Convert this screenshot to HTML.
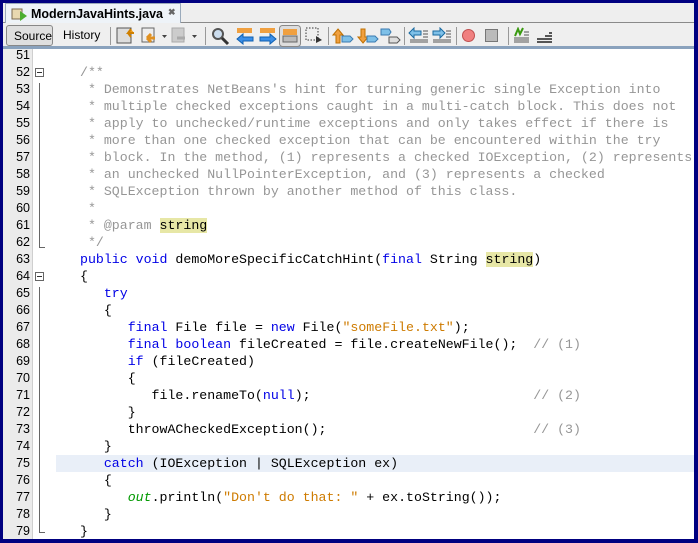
<!DOCTYPE html>
<html><head><meta charset="utf-8"><style>
*{margin:0;padding:0;box-sizing:border-box}
body{width:698px;height:543px;background:#000080;position:relative;overflow:hidden;font-family:"Liberation Sans",sans-serif}
#win{position:absolute;left:3px;top:3px;width:691px;height:536px;background:#fff}
#tabs{position:absolute;left:0;top:0;width:691px;height:20px;background:#eeeeee;border-bottom:1px solid #8a8a8a}
#tab{position:absolute;left:2px;top:0;width:176px;height:21px;background:#eef3f8;border:1px solid #9aaabb;border-bottom:none;font-weight:bold;font-size:12.5px;padding:3px 0 0 25px;color:#000}
#tb{position:absolute;left:0;top:20px;width:691px;height:26px;background:#efefef;border-bottom:3px solid #8aa2bd}
.btn{position:absolute;top:2px;height:21px;font-size:12px;padding-top:3px}
.sep{position:absolute;top:4px;width:1px;height:18px;background:#999}
.ic{position:absolute;top:4px}
#gut{position:absolute;left:0;top:46px;width:30px;height:490px;background:#ebebeb;border-right:1px solid #cfcfcf}
#code{position:absolute;left:0;top:44px;width:691px;font-family:"Liberation Mono",monospace;font-size:13.25px}
.l{height:17px;line-height:17px;position:relative;white-space:pre}
.n{position:absolute;left:0;width:27px;text-align:right;font-family:"Liberation Sans",sans-serif;font-size:12.5px;color:#000}
.t{position:absolute;left:77px}
.c{color:#969696}.k{color:#0000e6}.s{color:#ce7b00}.h{background:#e7e7a6}.o{color:#009900;font-style:italic}
.hl{background:#e9eff8;position:absolute;left:53px;right:0;top:0;height:17px}
.fb{position:absolute;left:32px;top:4px;width:9px;height:9px;border:1px solid #666;background:#fff}
.fb:after{content:"";position:absolute;left:1px;top:3px;width:5px;height:1px;background:#333}
.vl{position:absolute;left:36px;width:1px;background:#666}
</style></head><body>
<div id="win">
<div id="tabs"><div id="tab"><svg style="position:absolute;left:4px;top:2px" width="18" height="16"><rect x="2" y="3" width="10" height="10" fill="#e8d8b0" stroke="#7a6a50"/><path d="M10 5l7 5-7 5z" fill="#4caf30"/></svg>ModernJavaHints.java<span style="position:absolute;left:162px;top:3px;font-size:9px;color:#666">✖</span></div></div>
<div id="tb">
<div class="btn" style="left:3px;width:47px;border:1px solid #888;border-radius:3px;background:#dfdfdf;padding-left:7px">Source</div>
<div class="btn" style="left:60px">History</div>
<div class="sep" style="left:107px"></div>
<svg class="ic" style="left:113px" width="20" height="18"><rect x="1" y="1" width="14" height="15" fill="#ddd" stroke="#555"/><path d="M18 6h-6l3-4M12 6l3 4" stroke="#d08000" fill="#f0a020" stroke-width="2"/></svg>
<svg class="ic" style="left:138px" width="28" height="18"><rect x="1" y="1" width="12" height="14" fill="#eee" stroke="#666"/><path d="M6 11h8M6 11l4-4M6 11l4 4" stroke="#e09020" stroke-width="3"/><path d="M21 8l5 0-2.5 3z" fill="#444"/></svg>
<svg class="ic" style="left:168px" width="28" height="18"><rect x="1" y="1" width="12" height="14" fill="#ccc" stroke="#aaa"/><path d="M14 11h-8" stroke="#aaa" stroke-width="3"/><path d="M21 8l5 0-2.5 3z" fill="#444"/></svg>
<div class="sep" style="left:202px"></div>
<svg class="ic" style="left:208px" width="20" height="20"><circle cx="7" cy="7" r="5" fill="#cde" stroke="#555" stroke-width="2"/><path d="M11 11l6 6" stroke="#333" stroke-width="3"/></svg>
<svg class="ic" style="left:232px" width="20" height="18"><rect x="2" y="1" width="15" height="5" fill="#f0a040"/><path d="M2 12l6-5v3h10v4H8v3z" fill="#3a8ee8" stroke="#1060b0"/></svg>
<svg class="ic" style="left:255px" width="20" height="18"><rect x="2" y="1" width="15" height="5" fill="#f0a040"/><path d="M18 12l-6-5v3H2v4h10v3z" fill="#3a8ee8" stroke="#1060b0"/></svg>
<svg class="ic" style="left:276px;top:2px" width="22" height="22"><rect x="0.5" y="0.5" width="21" height="21" rx="3" fill="#ddd" stroke="#888"/><rect x="4" y="4" width="14" height="6" fill="#f0a040"/><rect x="4" y="11" width="14" height="6" fill="#bbb" stroke="#666"/></svg>
<svg class="ic" style="left:302px" width="18" height="18"><rect x="1" y="1" width="12" height="12" fill="none" stroke="#333" stroke-dasharray="1.5"/><path d="M11 9l6 4-6 3z" fill="#333"/></svg>
<div class="sep" style="left:325px"></div>
<svg class="ic" style="left:329px" width="22" height="18"><path d="M6 2l5 6H8v8H4V8H1z" fill="#f0a040" stroke="#c07000"/><path d="M10 9h8l3 3-3 3h-8z" fill="#7ec0e8" stroke="#3a7ab0"/></svg>
<svg class="ic" style="left:354px" width="22" height="18"><path d="M6 16l5-6H8V2H4v8H1z" fill="#f0a040" stroke="#c07000"/><path d="M10 9h8l3 3-3 3h-8z" fill="#7ec0e8" stroke="#3a7ab0"/></svg>
<svg class="ic" style="left:377px" width="22" height="18"><path d="M1 2h8l2 3-2 3H1z" fill="#7ec0e8" stroke="#3a7ab0"/><path d="M9 10h8l3 3-3 3H9z" fill="#ddd" stroke="#555"/></svg>
<div class="sep" style="left:401px"></div>
<svg class="ic" style="left:405px" width="22" height="18"><path d="M1 6l5-5v3h7v4H6v3z" fill="#7ec0e8" stroke="#1a6aa0"/><path d="M2 13h18M2 15h18M15 4h5M15 7h5M15 10h5" stroke="#555"/></svg>
<svg class="ic" style="left:428px" width="22" height="18"><path d="M14 6L9 1v3H2v4h7v3z" fill="#7ec0e8" stroke="#1a6aa0"/><path d="M2 13h18M2 15h18M15 4h5M15 7h5M15 10h5" stroke="#555"/></svg>
<div class="sep" style="left:453px"></div>
<svg class="ic" style="left:458px;top:5px" width="16" height="16"><circle cx="7.5" cy="7.5" r="6" fill="#f08080" stroke="#c05050"/></svg>
<svg class="ic" style="left:481px;top:5px" width="16" height="16"><rect x="1.5" y="1.5" width="12" height="12" fill="#bbb" stroke="#777"/></svg>
<div class="sep" style="left:505px"></div>
<svg class="ic" style="left:509px" width="20" height="18"><path d="M3 9l3-7 2 5 3-6" stroke="#3a9a10" stroke-width="2" fill="none"/><path d="M2 11h15M2 13h15M2 15h15M12 5h5M12 8h5" stroke="#555"/></svg>
<svg class="ic" style="left:532px" width="20" height="18"><path d="M2 12h15M2 15h15M10 9h7M14 6h3" stroke="#222" stroke-width="1.5"/></svg>
</div>
<div id="gut"></div>
<div class="vl" style="top:80px;height:165px"></div>
<div class="vl" style="top:284px;height:246px"></div>
<div style="position:absolute;left:36px;top:244px;width:6px;height:1px;background:#666"></div>
<div style="position:absolute;left:36px;top:529px;width:6px;height:1px;background:#666"></div>
<div id="code">
<div class="l"><span class="n">51</span></div>
<div class="l"><span class="n">52</span><span class="fb"></span><span class="t c">/**</span></div>
<div class="l"><span class="n">53</span><span class="t c"> * Demonstrates NetBeans's hint for turning generic single Exception into</span></div>
<div class="l"><span class="n">54</span><span class="t c"> * multiple checked exceptions caught in a multi-catch block. This does not</span></div>
<div class="l"><span class="n">55</span><span class="t c"> * apply to unchecked/runtime exceptions and only takes effect if there is</span></div>
<div class="l"><span class="n">56</span><span class="t c"> * more than one checked exception that can be encountered within the try</span></div>
<div class="l"><span class="n">57</span><span class="t c"> * block. In the method, (1) represents a checked IOException, (2) represents</span></div>
<div class="l"><span class="n">58</span><span class="t c"> * an unchecked NullPointerException, and (3) represents a checked</span></div>
<div class="l"><span class="n">59</span><span class="t c"> * SQLException thrown by another method of this class.</span></div>
<div class="l"><span class="n">60</span><span class="t c"> *</span></div>
<div class="l"><span class="n">61</span><span class="t c"> * @param <span class="h" style="color:#000">string</span></span></div>
<div class="l"><span class="n">62</span><span class="t c"> */</span></div>
<div class="l"><span class="n">63</span><span class="t"><span class="k">public void</span> demoMoreSpecificCatchHint(<span class="k">final</span> String <span class="h">string</span>)</span></div>
<div class="l"><span class="n">64</span><span class="fb"></span><span class="t">{</span></div>
<div class="l"><span class="n">65</span><span class="t">   <span class="k">try</span></span></div>
<div class="l"><span class="n">66</span><span class="t">   {</span></div>
<div class="l"><span class="n">67</span><span class="t">      <span class="k">final</span> File file = <span class="k">new</span> File(<span class="s">"someFile.txt"</span>);</span></div>
<div class="l"><span class="n">68</span><span class="t">      <span class="k">final boolean</span> fileCreated = file.createNewFile();  <span class="c">// (1)</span></span></div>
<div class="l"><span class="n">69</span><span class="t">      <span class="k">if</span> (fileCreated)</span></div>
<div class="l"><span class="n">70</span><span class="t">      {</span></div>
<div class="l"><span class="n">71</span><span class="t">         file.renameTo(<span class="k">null</span>);                            <span class="c">// (2)</span></span></div>
<div class="l"><span class="n">72</span><span class="t">      }</span></div>
<div class="l"><span class="n">73</span><span class="t">      throwACheckedException();                          <span class="c">// (3)</span></span></div>
<div class="l"><span class="n">74</span><span class="t">   }</span></div>
<div class="l"><span class="hl"></span><span class="n">75</span><span class="t">   <span class="k">catch</span> (IOException | SQLException ex)</span></div>
<div class="l"><span class="n">76</span><span class="t">   {</span></div>
<div class="l"><span class="n">77</span><span class="t">      <span class="o">out</span>.println(<span class="s">"Don't do that: "</span> + ex.toString());</span></div>
<div class="l"><span class="n">78</span><span class="t">   }</span></div>
<div class="l"><span class="n">79</span><span class="t">}</span></div>
</div>
</div>
</body></html>
